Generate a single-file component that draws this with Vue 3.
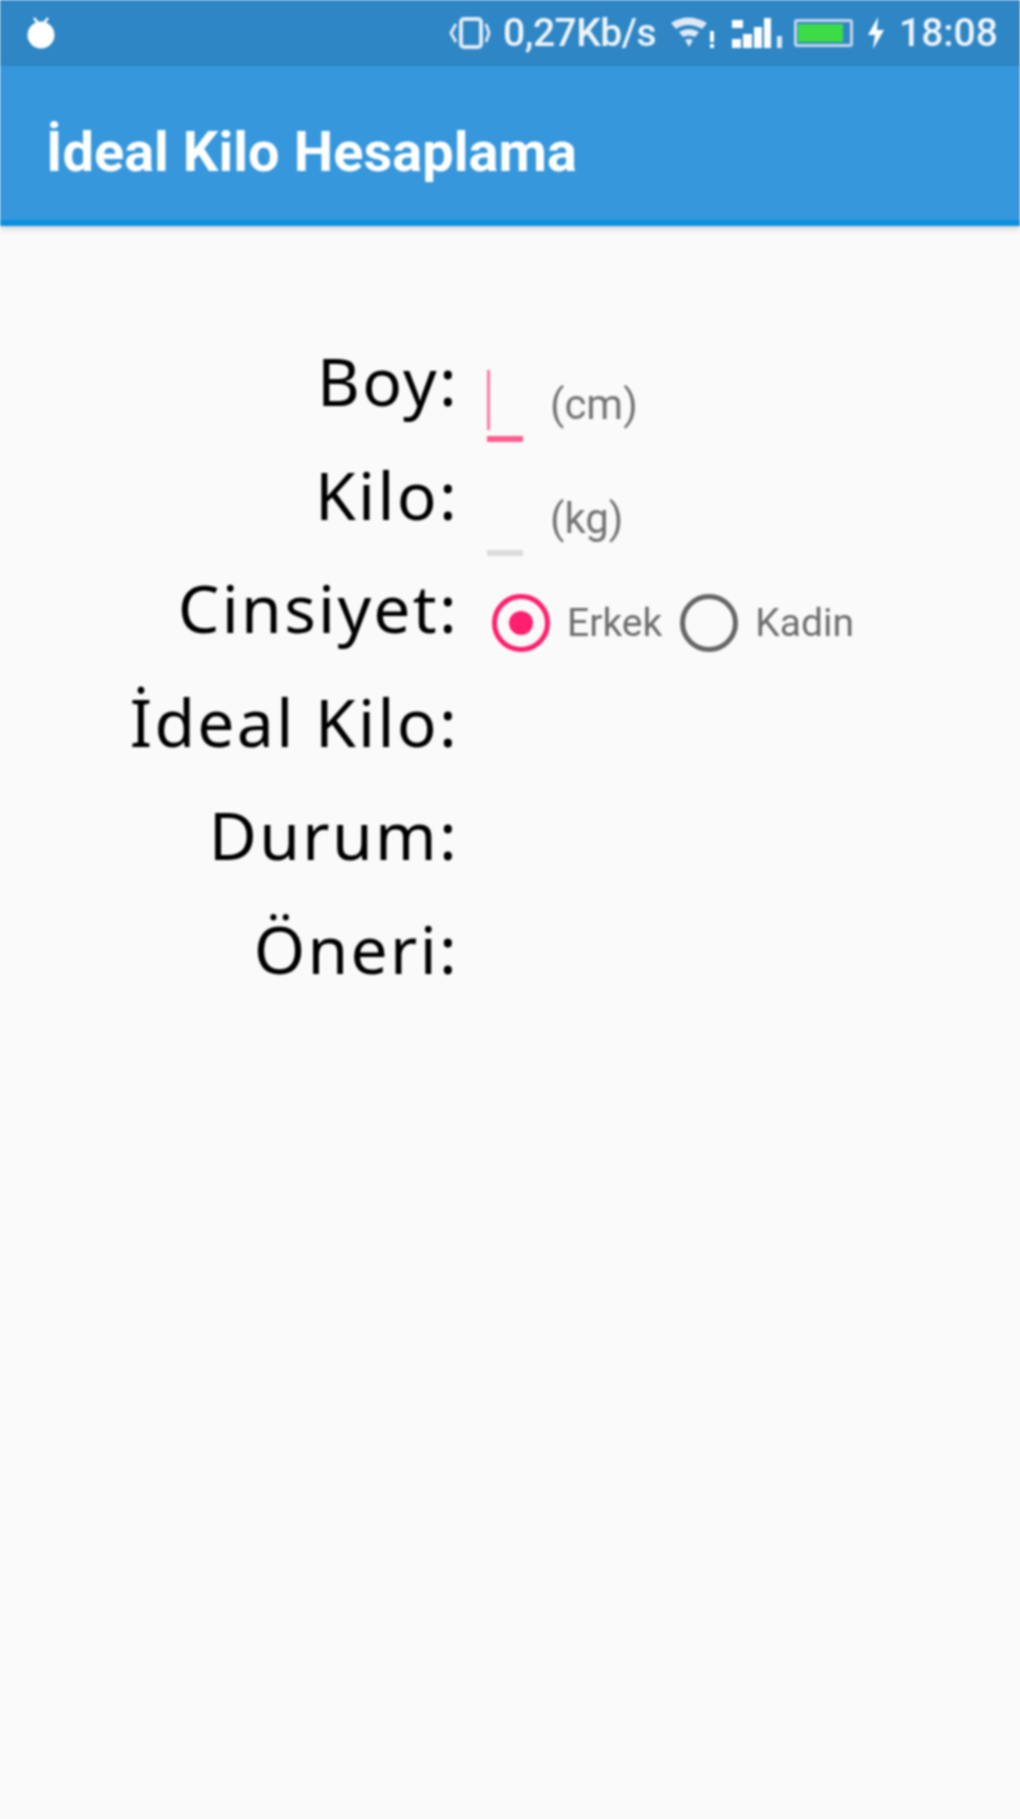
<template>
  <div class="screen">
    <div class="status-bar">
      <svg class="status-dot" viewBox="0 0 30 32">
        <path d="M8 1l4 5M22 1l-4 5" stroke="#fff" stroke-width="2.5" />
        <circle cx="15" cy="18" r="13.5" fill="#fff" />
      </svg>
      <div class="status-right">
        <svg class="vibrate" viewBox="0 0 42 34">
          <rect x="12" y="3" width="20" height="28" rx="3" fill="none" stroke="#dfe9f4" stroke-width="4" />
          <path d="M7 8l-5 9 5 9M37 8l3 9-3 9" fill="none" stroke="#dfe9f4" stroke-width="3" />
        </svg>
        <span class="speed">0,27Kb/s</span>
        <svg class="wifi" viewBox="0 0 44 34">
          <path d="M0 7Q17-4 36 7L31 13Q17 5 5 13ZM8 16Q18 10 28 16L24 21Q18 18 12 21ZM14 24Q18 22 22 24L18 31Z" fill="#dfe9f4" />
          <path d="M39 15h4v11h-4zM39 28h4v4h-4z" fill="#fff" />
        </svg>
        <svg class="signal" viewBox="0 0 51 34">
          <rect x="1" y="4" width="11" height="8" fill="#fff" />
          <rect x="1" y="23" width="9" height="9" fill="#fff" />
          <rect x="12" y="18" width="9" height="14" fill="#fff" />
          <rect x="23" y="11" width="8" height="21" fill="#fff" />
          <rect x="33" y="2" width="7" height="30" fill="#fff" />
          <rect x="46" y="20" width="5" height="12" fill="#dfe9f4" />
        </svg>
        <div class="battery"><div class="battery-fill" :style="{ width: batteryLevel + '%' }"></div></div>
        <svg class="bolt" viewBox="0 0 20 32">
          <path d="M12 0L2 18h7L7 32l11-19h-7z" fill="#fff" />
        </svg>
        <span class="clock">18:08</span>
      </div>
    </div>

    <header class="app-bar">İdeal Kilo Hesaplama</header>

    <main class="form">
      <div v-for="row in rows" :key="row.label" class="row">
        <div class="label">{{ row.label }}</div>
        <div class="value">
          <template v-if="row.unit">
            <div class="input" :class="{ focused: row.focused }">
              <span v-if="row.focused" class="caret"></span>
            </div>
            <span class="unit">{{ row.unit }}</span>
          </template>
          <div v-if="row.gender" class="radios">
            <div v-for="g in genders" :key="g" class="radio-item">
              <span class="radio" :class="{ checked: gender === g }"></span>
              <span class="radio-text">{{ g }}</span>
            </div>
          </div>
        </div>
      </div>
    </main>
  </div>
</template>

<script setup>
import { ref } from 'vue'

const batteryLevel = 100
const gender = ref('Erkek')
const genders = ['Erkek', 'Kadin']

const rows = [
  { label: 'Boy:', unit: '(cm)', focused: true },
  { label: 'Kilo:', unit: '(kg)' },
  { label: 'Cinsiyet:', gender: true },
  { label: 'İdeal Kilo:' },
  { label: 'Durum:' },
  { label: 'Öneri:' }
]
</script>

<style>
html, body {
  margin: 0;
  background: #fafafa;
}
</style>

<style scoped>
.screen {
  width: 1020px;
  height: 1819px;
  background: #fafafa;
  overflow: hidden;
  font-family: Roboto, "Liberation Sans", sans-serif;
  filter: blur(1.2px);
}
.status-bar {
  height: 66px;
  background: #2e86c5;
  display: flex;
  align-items: center;
  justify-content: space-between;
  padding: 0 24px 0 26px;
  box-sizing: border-box;
  color: #eef4fa;
  font-size: 39px;
  font-weight: 500;
}
.status-dot {
  width: 30px;
  height: 32px;
}
.status-right {
  display: flex;
  align-items: center;
}
.vibrate {
  width: 42px;
  height: 34px;
  margin-right: 12px;
}
.speed {
  width: 159px;
  white-space: nowrap;
  letter-spacing: -0.5px;
  margin-right: 9px;
}
.wifi {
  width: 44px;
  height: 34px;
  margin-right: 16px;
}
.signal {
  width: 51px;
  height: 34px;
  margin-right: 12px;
}
.battery {
  width: 59px;
  height: 28px;
  box-sizing: border-box;
  border: 3px solid #c5d5ea;
  border-radius: 3px;
  padding: 2px 7px 2px 1px;
  margin-right: 13px;
}
.battery-fill {
  height: 100%;
  background: #3cdc46;
}
.bolt {
  width: 20px;
  height: 32px;
  margin-right: 13px;
}
.clock {
  width: 97px;
  white-space: nowrap;
}
.app-bar {
  height: 160px;
  box-sizing: border-box;
  background: #3697dc;
  border-bottom: 6px solid #0a90de;
  box-shadow: 0 3px 6px rgba(0, 0, 0, 0.16);
  color: #fff;
  font-size: 56px;
  font-weight: 700;
  line-height: 134px;
  padding: 19px 0 0 46px;
  position: relative;
}
.form {
  padding-top: 118px;
}
.row {
  display: flex;
  height: 113.6px;
}
.label {
  width: 459px;
  flex: none;
  text-align: right;
  font-family: "Noto Sans", sans-serif;
  font-size: 66px;
  line-height: 72px;
  letter-spacing: 2.3px;
  color: #000;
}
.value {
  display: flex;
  padding-left: 28px;
  position: relative;
}
.input {
  width: 36px;
  height: 66px;
  margin-top: 26px;
  border-bottom: 6px solid #dcdcdc;
  position: relative;
}
.input.focused {
  border-bottom-color: #ff5c8f;
}
.caret {
  position: absolute;
  left: 0;
  top: 0;
  width: 3px;
  height: 60px;
  background: #ff7ba3;
}
.unit {
  font-size: 42px;
  color: #757575;
  margin-left: 27px;
  line-height: 50px;
  margin-top: 36px;
}
.radios {
  display: flex;
  margin-top: 22px;
  margin-left: 5px;
}
.radio-item {
  display: flex;
  align-items: center;
  height: 60px;
}
.radio {
  width: 58px;
  height: 58px;
  box-sizing: border-box;
  border: 5px solid #666;
  border-radius: 50%;
  position: relative;
}
.radio.checked {
  border-color: #ff1f6e;
}
.radio.checked::after {
  content: "";
  position: absolute;
  left: 12px;
  top: 12px;
  width: 24px;
  height: 24px;
  border-radius: 50%;
  background: #ff1f6e;
}
.radio-text {
  font-size: 39px;
  color: #6e6e6e;
  margin-left: 17px;
  margin-right: 18px;
}
</style>
